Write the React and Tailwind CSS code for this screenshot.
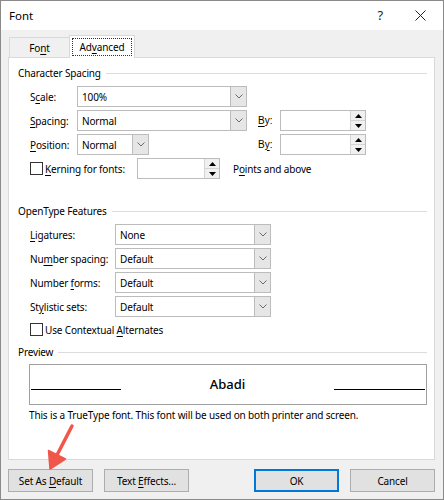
import React from "react";

function Chevron() {
  return (
    <svg width="8" height="5" viewBox="0 0 8 5" className="block">
      <path d="M0.5 0.5 L4 4 L7.5 0.5" fill="none" stroke="#6b6b6b" strokeWidth="1" />
    </svg>
  );
}

function Combo({ className, value }) {
  return (
    <div className={"flex h-[21px] border border-[#bcbcbc] bg-white " + className}>
      <div className="flex-1 flex items-center pl-[4px] text-black">{value}</div>
      <div className="w-[16px] border-l border-[#bcbcbc] bg-[#e6e6e6] flex items-center justify-center">
        <Chevron />
      </div>
    </div>
  );
}

function Spinner({ className }) {
  return (
    <div className={"flex h-[21px] border border-[#bcbcbc] bg-white " + className}>
      <div className="flex-1" />
      <div className="w-[15px] flex flex-col border-l border-[#d4d4d4] bg-[#f0f0f0]">
        <div className="flex-1 flex items-center justify-center border-b border-[#d4d4d4]">
          <svg width="7" height="4" viewBox="0 0 7 4" className="block">
            <path d="M0 4 L3.5 0 L7 4 Z" fill="#000" />
          </svg>
        </div>
        <div className="flex-1 flex items-center justify-center">
          <svg width="7" height="4" viewBox="0 0 7 4" className="block">
            <path d="M0 0 L3.5 4 L7 0 Z" fill="#000" />
          </svg>
        </div>
      </div>
    </div>
  );
}

function Checkbox() {
  return <div className="w-[13px] h-[13px] border border-[#333333] bg-white shrink-0" />;
}

function GroupHeader({ children }) {
  return (
    <div className="flex items-center h-[16px]">
      <span className="text-black">{children}</span>
      <div className="flex-1 h-px bg-[#dcdcdc] ml-[5px]" />
    </div>
  );
}

function U({ children }) {
  return <span className="underline underline-offset-[2px] decoration-[1px]">{children}</span>;
}

function Button({ children, primary }) {
  return (
    <div
      className={
        "w-[85px] h-[23px] flex items-center justify-center bg-[#e1e1e1] text-black " +
        (primary
          ? "border border-[#0078d7] shadow-[inset_0_0_0_1px_#0078d7]"
          : "border border-[#adadad]")
      }
    >
      <span>{children}</span>
    </div>
  );
}

export default function App() {
  return (
    <div className="relative w-[444px] h-[500px] box-border border border-[#8a8a8a] flex flex-col font-['Noto_Sans',sans-serif] text-[10px] tracking-[-0.15px] leading-none text-black bg-[#f0f0f0] overflow-hidden">
      {/* Title bar */}
      <div className="h-[29px] bg-white flex items-center pl-[8px] shrink-0">
        <span className="text-[11.5px] tracking-normal flex-1">Font</span>
        <span className="text-[13px] mr-[32px] text-[#222]">?</span>
        <svg width="11" height="11" viewBox="0 0 11 11" className="mr-[17px]">
          <path d="M0.5 0.5 L10.5 10.5 M10.5 0.5 L0.5 10.5" stroke="#222" strokeWidth="1" />
        </svg>
      </div>

      {/* Body */}
      <div className="flex-1 flex flex-col pl-[7px] pr-[8px]">
        {/* Tabs */}
        <div className="h-[27px] flex items-end shrink-0">
          <div className="ml-[1px] w-[61px] h-[20px] border border-b-0 border-[#d9d9d9] bg-[#f0f0f0] flex items-center justify-center">
            <span>
              Fo<U>n</U>t
            </span>
          </div>
          <div className="relative z-10 -ml-px -mb-px w-[66px] h-[23px] border border-b-0 border-[#d9d9d9] bg-white p-[2px]">
            <div className="h-full border border-dotted border-[#333] flex items-center justify-center">
              <span>
                Ad<U>v</U>anced
              </span>
            </div>
          </div>
        </div>

        {/* Panel */}
        <div className="h-[403px] border border-[#d9d9d9] bg-white pt-[7px] pl-[9px] pr-[7px] flex flex-col shrink-0">
          <GroupHeader>Character Spacing</GroupHeader>

          <div className="mt-[5px] pl-[12px] flex flex-col gap-[3px]">
            <div className="grid grid-cols-[47px_170px_33px_86px] items-center h-[21px]">
              <span>
                S<U>c</U>ale:
              </span>
              <Combo className="w-[170px]" value="100%" />
            </div>
            <div className="grid grid-cols-[47px_170px_33px_86px] items-center h-[21px]">
              <span>
                <U>S</U>pacing:
              </span>
              <Combo className="w-[170px]" value="Normal" />
              <span className="pl-[11px] font-['Liberation_Sans',sans-serif] text-[10px] tracking-normal">
                <U>B</U>y:
              </span>
              <Spinner className="w-[86px]" />
            </div>
            <div className="grid grid-cols-[47px_170px_33px_86px] items-center h-[21px]">
              <span>
                <U>P</U>osition:
              </span>
              <Combo className="w-[72px]" value="Normal" />
              <span className="pl-[11px] font-['Liberation_Sans',sans-serif] text-[10px] tracking-normal">
                B<U>y</U>:
              </span>
              <Spinner className="w-[86px]" />
            </div>
            <div className="flex items-center h-[21px]">
              <Checkbox />
              <span className="ml-[2px] w-[92px]">
                <U>K</U>erning for fonts:
              </span>
              <Spinner className="w-[83px]" />
              <span className="ml-[13px]">
                P<U>o</U>ints and above
              </span>
            </div>
          </div>

          <div className="mt-[24px]">
            <GroupHeader>OpenType Features</GroupHeader>
          </div>

          <div className="mt-[5px] pl-[12px] flex flex-col gap-[3px]">
            <div className="flex items-center h-[21px]">
              <span className="w-[85px]">
                <U>L</U>igatures:
              </span>
              <Combo className="w-[156px]" value="None" />
            </div>
            <div className="flex items-center h-[21px]">
              <span className="w-[85px]">
                Nu<U>m</U>ber spacing:
              </span>
              <Combo className="w-[156px]" value="Default" />
            </div>
            <div className="flex items-center h-[21px]">
              <span className="w-[85px]">
                Number <U>f</U>orms:
              </span>
              <Combo className="w-[156px]" value="Default" />
            </div>
            <div className="flex items-center h-[21px]">
              <span className="w-[85px]">
                St<U>y</U>listic sets:
              </span>
              <Combo className="w-[156px]" value="Default" />
            </div>
            <div className="flex items-center h-[19px]">
              <Checkbox />
              <span className="ml-[2px]">
                Use Contextual <U>A</U>lternates
              </span>
            </div>
          </div>

          <div className="mt-[5px]">
            <GroupHeader>Preview</GroupHeader>
          </div>

          <div className="mt-[4px] ml-[11px] w-[398px] h-[41px] border border-[#a0a0a0] flex items-center justify-between px-[1px]">
            <div className="w-[90px] h-px bg-black mt-[9px]" />
            <span className="text-[13px] font-medium tracking-normal">Abadi</span>
            <div className="w-[91px] h-px bg-black mt-[9px]" />
          </div>

          <div className="ml-[11px] mt-[3px] h-[14px] flex items-center">
            <span>This is a TrueType font. This font will be used on both printer and screen.</span>
          </div>
        </div>

        {/* Buttons */}
        <div className="mt-[9px] flex justify-between shrink-0">
          <div className="flex gap-[11px]">
            <Button>
              Set As <U>D</U>efault
            </Button>
            <Button>
              Text <U>E</U>ffects...
            </Button>
          </div>
          <div className="flex gap-[11px]">
            <Button primary>OK</Button>
            <Button>Cancel</Button>
          </div>
        </div>
      </div>

      {/* Annotation arrow */}
      <svg
        className="absolute left-0 top-0 pointer-events-none"
        width="444"
        height="500"
        viewBox="0 0 444 500"
      >
        <line x1="71" y1="425" x2="55" y2="456" stroke="#f0564a" strokeWidth="3.5" strokeLinecap="round" />
        <path d="M49 468 L47.5 449.5 L64.5 458 Z" fill="#f0564a" stroke="#f0564a" strokeWidth="1.5" strokeLinejoin="round" />
      </svg>
    </div>
  );
}
